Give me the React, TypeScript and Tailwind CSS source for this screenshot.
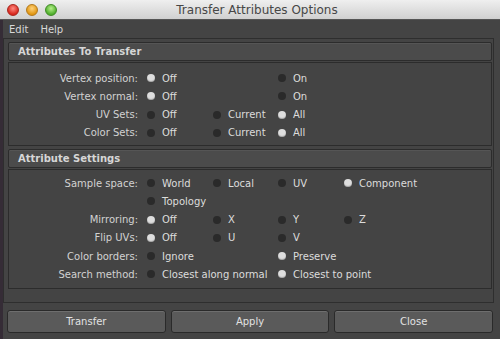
import React from 'react';

type Opt = { label: string; on?: boolean };
type Row = { label: string; options: (Opt | null)[] };

const colW = ['w-[66px]', 'w-[65px]', 'w-[66px]', 'w-[80px]'];

const Radio: React.FC<{ on?: boolean }> = ({ on }) => (
  <span
    className={`inline-block w-[8px] h-[8px] rounded-full shrink-0 ${
      on ? 'bg-[#dedede] shadow-[inset_0_-1px_1px_rgba(0,0,0,0.25)]' : 'bg-[#2a2a2a]'
    }`}
  />
);

const OptionRow: React.FC<{ row: Row }> = ({ row }) => (
  <div className="flex items-center h-[18.25px]">
    <div className="w-[129px] text-right text-[#d2d2d2]">{row.label}</div>
    <div className="flex items-center ml-[9px]">
      {row.options.map((o, i) => (
        <div key={i} className={`flex items-center ${colW[i]}`}>
          {o && (
            <>
              <Radio on={o.on} />
              <span className="ml-[7px] text-[#dcdcdc] whitespace-nowrap">{o.label}</span>
            </>
          )}
        </div>
      ))}
    </div>
  </div>
);

const Section: React.FC<{ title: string; rows: Row[]; className?: string; bodyClass: string }> = ({
  title,
  rows,
  className,
  bodyClass,
}) => (
  <div className={className}>
    <div className="h-[19px] flex items-center pl-[9px] bg-[#4b4b4b] border border-[#2c2c2c] rounded-[2px] shadow-[inset_0_1px_0_rgba(255,255,255,0.06)]">
      <span className="font-bold text-[#d6d6d6]">{title}</span>
    </div>
    <div className={`mt-[1px] border border-[#2c2c2c] bg-[#444444] ${bodyClass}`}>
      {rows.map((r, i) => (
        <OptionRow key={i} row={r} />
      ))}
    </div>
  </div>
);

const transferRows: Row[] = [
  { label: 'Vertex position:', options: [{ label: 'Off', on: true }, null, { label: 'On' }] },
  { label: 'Vertex normal:', options: [{ label: 'Off', on: true }, null, { label: 'On' }] },
  { label: 'UV Sets:', options: [{ label: 'Off' }, { label: 'Current' }, { label: 'All', on: true }] },
  { label: 'Color Sets:', options: [{ label: 'Off' }, { label: 'Current' }, { label: 'All', on: true }] },
];

const settingRows: Row[] = [
  {
    label: 'Sample space:',
    options: [{ label: 'World' }, { label: 'Local' }, { label: 'UV' }, { label: 'Component', on: true }],
  },
  { label: '', options: [{ label: 'Topology' }] },
  { label: 'Mirroring:', options: [{ label: 'Off', on: true }, { label: 'X' }, { label: 'Y' }, { label: 'Z' }] },
  { label: 'Flip UVs:', options: [{ label: 'Off', on: true }, { label: 'U' }, { label: 'V' }] },
  { label: 'Color borders:', options: [{ label: 'Ignore' }, null, { label: 'Preserve', on: true }] },
  {
    label: 'Search method:',
    options: [{ label: 'Closest along normal' }, null, { label: 'Closest to point', on: true }],
  },
];

export default function App() {
  return (
    <div
      className="w-[500px] h-[339px] overflow-hidden bg-[#444444] text-[10px] flex flex-col"
      style={{ fontFamily: '"DejaVu Sans", Verdana, sans-serif' }}
    >
      {/* title bar */}
      <div className="relative h-[20px] shrink-0 bg-gradient-to-b from-[#efefef] to-[#d0d0d0] border-b border-[#555555] flex items-center justify-center pl-[14px]">
        <div className="absolute left-[7px] top-[4px] flex gap-[7px]">
          <span className="w-[12px] h-[12px] rounded-full bg-[radial-gradient(circle_at_50%_35%,#ff8a80,#d7261c_70%)] border border-[#a8251c]" />
          <span className="w-[12px] h-[12px] rounded-full bg-[radial-gradient(circle_at_50%_35%,#ffd27a,#e09612_70%)] border border-[#b3781a]" />
          <span className="w-[12px] h-[12px] rounded-full bg-[radial-gradient(circle_at_50%_35%,#b6f08a,#4fae2c_70%)] border border-[#3f8a25]" />
        </div>
        <span className="text-[12px] text-[#474747] pt-[1px]">Transfer Attributes Options</span>
      </div>

      <div className="flex-1 flex flex-col border-l-[3px] border-[#352c36]">
        {/* menu bar */}
        <div className="h-[18px] flex items-center gap-[12px] pl-[6px] text-[#d8d8d8]">
          <span>Edit</span>
          <span>Help</span>
        </div>

        {/* main frame */}
        <div className="mr-[6px] h-[265px] border border-[#2e2e2e] pl-[4px] pr-[1px] pt-[3px]">
          <Section title="Attributes To Transfer" rows={transferRows} bodyClass="pt-[6px] pb-[3px]" />
          <Section title="Attribute Settings" rows={settingRows} className="mt-[3px]" bodyClass="pt-[4px] pb-[4px]" />
        </div>

        {/* buttons */}
        <div className="flex gap-[5px] pl-[4px] pr-[7px] mt-[7px]">
          {['Transfer', 'Apply', 'Close'].map((b) => (
            <div
              key={b}
              className="flex-1 h-[23px] flex items-center justify-center rounded-[3px] bg-[#5a5a5a] border border-[#2a2a2a] shadow-[inset_0_1px_0_rgba(255,255,255,0.12)] text-[#e2e2e2]"
            >
              {b}
            </div>
          ))}
        </div>
      </div>
    </div>
  );
}
